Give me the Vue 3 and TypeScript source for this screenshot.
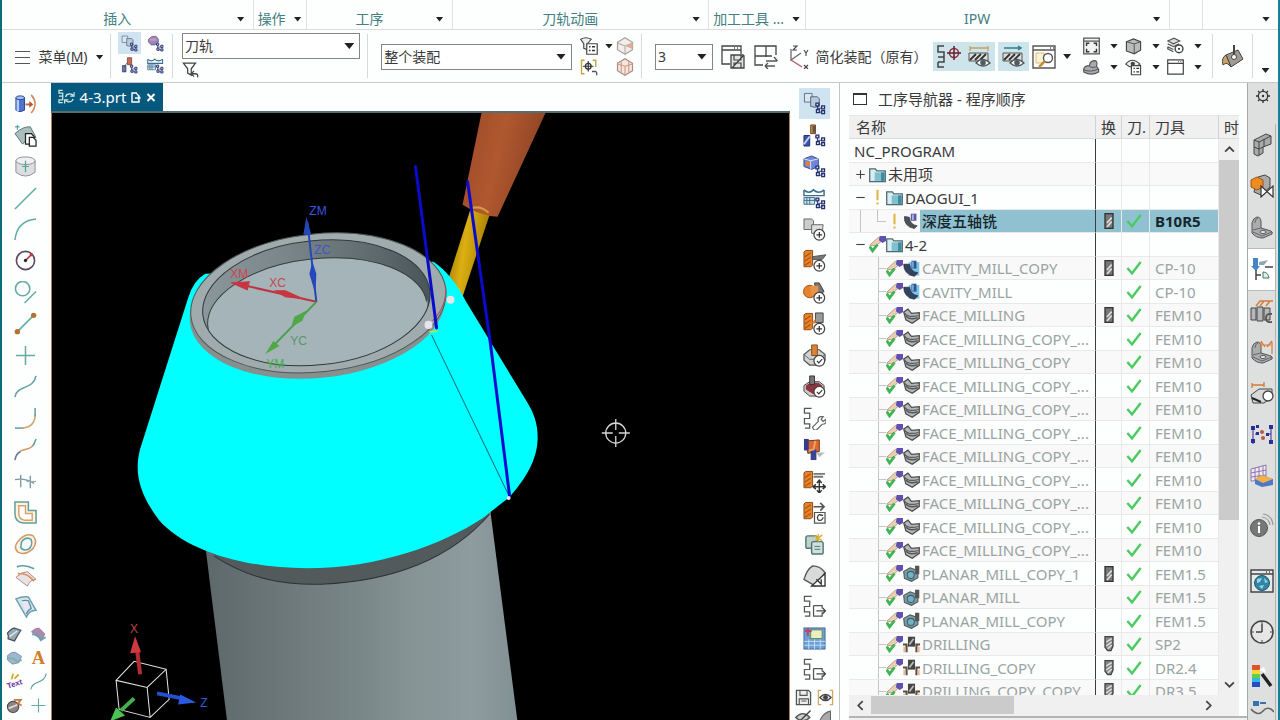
<script setup lang="ts">
import { ref } from 'vue'

type Row = {
  name: string
  slots: string[]
  tool?: string
  changed?: 'mill' | 'drill'
  dim?: boolean
  selected?: boolean
}

const tree =
  '<path d="M13 13.500h4M15 13v8h6M15 17h6" fill="none" stroke="#22306e"/><path d="M13.500 11.500h3v3h-3zM14 18.500h3v3h-3zM19.500 14.500h3v3h-3zM19.500 19.500h3v3h-3z" fill="#dde" stroke="#22306e" stroke-width="1.300"/>'
const plus =
  '<circle cx="17" cy="17.500" r="5.600" fill="#fff" stroke="#444" stroke-width="1.300"/><path d="M17 14.500v6M14 17.500h6" stroke="#333" stroke-width="1.300"/>'
const okMark =
  '<circle cx="17" cy="17.500" r="5.600" fill="#fff" stroke="#444" stroke-width="1.300"/><path d="M14.500 17.500l2 2.200 3.500-4" fill="none" stroke="#333" stroke-width="1.200"/>'
const orange =
  '<path d="M1 3l2-1.500h7V17l-2 1.500H1z" fill="#e5822b" stroke="#8c4a16"/><path d="M2 8l6-4M2 12.500l6-4M2 17l6-4" stroke="#a9540f" stroke-width="1.200"/>'
const snake = '<path d="M9 1.500H1.500v5H7v5.500H1.500v5.500H7V22H2" fill="none" stroke="#555" stroke-width="1.300"/>'
const eye =
  '<path d="M8 18q6-7 14 0q-7 6-14 0z" fill="#fff" stroke="#555" stroke-width="1.300"/><circle cx="15" cy="17.800" r="2.800" fill="#4d5b66"/>'
const bracket =
  '<path d="M2 8q1-5 5-6 4 0 4 5v6l10 3q2 1 1 3l-9 4q-7 0-11-5z" fill="#a9adb0" stroke="#555"/><path d="M5 8q0-4 3-5M3 15l8-2M3 17l9 4 10-4" fill="none" stroke="#666"/><ellipse cx="13" cy="17" rx="3" ry="1.500" fill="#eee" stroke="#555"/>'
const doorway =
  '<path d="M11 11h9v3M11 11v11h9v-4" fill="none" stroke="#555" stroke-width="1.300"/><path d="M14 16.500h9M20.500 13.500l3 3-3 3" fill="none" stroke="#444" stroke-width="1.300"/>'

const art: Record<string, string> = {
  extrude:
    '<path d="M2 6v13q4 3 9 0V6z" fill="#4f74cf" stroke="#27458f"/><path d="M4 7v13" stroke="#b9ccff" stroke-width="2.500"/><ellipse cx="6.500" cy="6" rx="4.500" ry="2" fill="#a9bff2" stroke="#27458f"/><path d="M12 13h7" stroke="#c76a3a" stroke-width="2"/><path d="M16 9.500l4 3.500-4 3.500z" fill="#b5523a"/><path d="M18 3q8 9 0 19" fill="none" stroke="#d08a5a" stroke-width="1.600"/>',
  patch:
    '<path d="M1 10Q10 2 17 3l6 11Q15 13 9 21z" fill="#a9bfbd" stroke="#5e7472"/><path d="M1 3h5M3.500 1v5" stroke="#2a9c8f"/><path d="M12 10h6l3 3v8h-9z" fill="#fff" stroke="#222" stroke-width="1.300"/><path d="M16 14h4l3 3v6h-7z" fill="#fff" stroke="#222" stroke-width="1.300"/>',
  cylinder:
    '<path d="M2 6v12q10 8 20 0V6z" fill="#dcdedf" stroke="#8b8f92"/><ellipse cx="12" cy="6" rx="10" ry="4" fill="#eff0f1" stroke="#8b8f92"/><path d="M12 6v12M8.500 12h7" stroke="#4fa596" stroke-width="1.300"/>',
  line: '<path d="M1 23L23 1" stroke="#5fae9f" stroke-width="1.600"/>',
  arc: '<path d="M1 23Q3 3 23 1" fill="none" stroke="#5fae9f" stroke-width="1.600"/>',
  circleRadius:
    '<circle cx="12" cy="12" r="9.500" fill="none" stroke="#5a4b63" stroke-width="1.700"/><path d="M12 12l6-6" stroke="#c23540" stroke-width="1.800"/><circle cx="12" cy="12" r="1.700" fill="#322"/><circle cx="18" cy="6" r="1.600" fill="#c23540"/>',
  circleTangent:
    '<circle cx="9" cy="8" r="7.500" fill="none" stroke="#67aaa0" stroke-width="1.600"/><path d="M11 23L23 11" stroke="#67aaa0" stroke-width="1.600"/>',
  segment:
    '<path d="M3 21L21 3" stroke="#5fae9f" stroke-width="1.600"/><circle cx="3.500" cy="20.500" r="2.800" fill="#b8702f"/><circle cx="20.500" cy="3.500" r="2.800" fill="#b8702f"/>',
  cross: '<path d="M12 2v20M2 12h20" stroke="#67aaa0" stroke-width="1.600"/>',
  spline: '<path d="M1 23C3 10 20 16 23 1" fill="none" stroke="#5f9f9f" stroke-width="1.600"/>',
  corner: '<path d="M1 22h9" stroke="#5f9f9f" stroke-width="1.600"/><path d="M8 22Q22 21 22 8" fill="none" stroke="#cfa470" stroke-width="1.600"/><path d="M22 10V1" stroke="#5f9f9f" stroke-width="1.600"/>',
  bridge: '<path d="M1 23Q2 16 7 14" fill="none" stroke="#6a7f88" stroke-width="1.600"/><path d="M6 14C12 11 19 12 20 7" fill="none" stroke="#d49a5f" stroke-width="1.600"/><path d="M20 8L23 1" stroke="#5f9f9f" stroke-width="1.600"/>',
  trim: '<path d="M1 10q10-2 20 4M7 5v13M17 6v13" fill="none" stroke="#7a9a9e" stroke-width="1.400"/><path d="M13 12h10" stroke="#9ab" stroke-width="1.200"/>',
  offset:
    '<path d="M1 1h14v9h8v13H10Q1 22 1 13z" fill="#fdf3e4" stroke="#5fa09c" stroke-width="1.600"/><path d="M5 5h7v8h7v7h-8q-6-1-6-7z" fill="#fff" stroke="#dba066" stroke-width="1.500"/>',
  ring: '<path d="M4 9Q12-1 20 3q5 6 0 13-8 8-16 4-5-5 0-11z" fill="#fdf3e4" stroke="#cf9a62" stroke-width="1.600"/><path d="M8 9q5-6 10-2 2 6-3 10-6 2-8-2z" fill="#f4fbfb" stroke="#5f9fa5" stroke-width="1.600"/>',
  project:
    '<path d="M3 3q8-3 18 2" fill="none" stroke="#5f9fa5" stroke-width="1.700"/><path d="M2 14q6-6 12-6l9 8q-6 0-9 7z" fill="#e6e3e6" stroke="#a98d80"/><path d="M4 10q10-1 17 8" fill="none" stroke="#dd9158" stroke-width="1.700"/>',
  surface:
    '<path d="M2 4Q9 1 15 2l8 14q-7 0-10 7z" fill="#d4e4ea" stroke="#6b9fae" stroke-width="1.500"/><path d="M8 6q5-1 7 0l3 8q-4 2-5 6" fill="#e8e8f4" stroke="#5a8fa8" stroke-width="1.300"/>',
  sheetA: '<path d="M2 10q6-7 10-7l9 3q-4 6-9 15l-9-3q1-4-1-8z" fill="#99a9b1" stroke="#44545c" stroke-width="1.800"/><path d="M5 15L16 7" stroke="#dfe9ee" stroke-width="2"/>',
  sheetB: '<path d="M2 8q6-6 11-5l8 8-4 9q-4-6-9-6z" fill="#a98ab0" stroke="#9a7a7d"/><path d="M3 12q8-1 12 8l7-4" fill="none" stroke="#62a5ad" stroke-width="2.500"/>',
  sheetC: '<path d="M2 8q6-6 11-5l9 6-4 9-9 2-7-6z" fill="#9fb6d0" stroke="#6f7fa0"/><path d="M3 12q9-2 12 5l7-3" fill="none" stroke="#79b3a9" stroke-width="2.500"/>',
  letterA: '<text x="12" y="20" text-anchor="middle" font-family="Liberation Serif, serif" font-weight="bold" font-size="26" fill="#cf7d27">A</text>',
  textArt: '<path d="M8 9L10 1M12 8l6-6" stroke="#d9a72a" stroke-width="2.500"/><text x="12" y="19" text-anchor="middle" transform="rotate(-18 12 15)" font-family="Liberation Sans, sans-serif" font-weight="bold" font-size="11" fill="#6a2f9c">Text</text>',
  nut: '<circle cx="10" cy="14" r="8" fill="#8d8585" stroke="#4b4545" stroke-width="1.500"/><path d="M4 16l12-5" stroke="#ddd" stroke-width="2.500"/><path d="M11 4h10l-4 5 5 3" fill="none" stroke="#c77a3d" stroke-width="2.500"/>',

  navProgram: '<path d="M1.500 1.500h8v9h-8z" fill="#dce6ee" stroke="#5f7488"/><path d="M8 5h7l2 2v8q-4 2-9 0z" fill="#b9cad8" stroke="#4f6478"/>' + tree,
  navMachine: '<path d="M8 1h5v9H8z" fill="#d98a3c" stroke="#72431a"/><path d="M10 2h3v7h-3z" fill="#555"/><path d="M1 12h6v11H1z" fill="#3a53ad" stroke="#22306e"/><path d="M1 21L7 13" stroke="#c9d4ff" stroke-width="1.800"/>' + tree,
  navGeometry: '<path d="M1 4l8-3 7 3v8l-7 3-8-3z" fill="#6e86dc" stroke="#3b4a94"/><path d="M1 4l7 2 8-2M8 6v9" fill="none" stroke="#dfe6ff"/><circle cx="5" cy="9" r="2.500" fill="#e5822b"/>' + tree,
  navMethod: '<path d="M1 3q5 5 10 0 5 5 11 0M1 3v6h21V3" fill="none" stroke="#3c6f8c" stroke-width="1.500"/><path d="M1 11h11v7H1zM4 11v7M7 11v7M1 14h11" fill="#cfe4ee" stroke="#3c6f8c"/>' + tree,
  addProgram: '<path d="M1 1h8l2 2v9H1z" fill="#ccc" stroke="#666"/><path d="M9 7h12l-1 9H9z" fill="#ddd" stroke="#666"/>' + plus,
  addTool: orange + '<path d="M10 8l14-2-4 5H10z" fill="#777" stroke="#555"/>' + plus,
  addGeometry: '<path d="M12 2h5l5 9-8 4z" fill="#777" stroke="#444"/><circle cx="7" cy="11" r="6.500" fill="#e5822b" stroke="#9a5012"/><path d="M8 5h8v10H8z" fill="#e99347"/>' + plus,
  addOperation: orange + '<path d="M13 1h8v10h-8z" fill="#999" stroke="#444"/><path d="M9 12l4-5v5z" fill="#e5822b"/>' + plus,
  generate: '<path d="M1 11l6-5h10l6 5v6l-7 5H7l-6-5z" fill="#d0d3d4" stroke="#555" stroke-width="1.300"/><path d="M1 11l6 5h10l6-5" fill="none" stroke="#666"/><path d="M9 1h6v11H9z" fill="#d9843a" stroke="#8c4a16"/>' + okMark,
  verify: '<path d="M1 11l6-4h10l5 4v7l-7 4H7l-6-5z" fill="#c9cbcc" stroke="#444"/><path d="M3 11l5-3h8l4 3v5l-9 4-8-5z" fill="#8f3440"/><path d="M7 1h5v9H7z" fill="#777" stroke="#333"/>' + okMark,
  editPath: snake + '<path d="M10 21l6-6q-1-4 2-5l3 0-2 3 2 2 3-2q1 5-4 5l-6 6q-3 1-4-3z" fill="#fff" stroke="#666" stroke-width="1.300"/>',
  machine: '<path d="M14 15h9l-6 5z" fill="#bbb"/><path d="M4 3l13-1v12l-12 2z" fill="#d96b2f" stroke="#7b2c10"/><path d="M1 1h5v12H1z" fill="#333c85"/><path d="M8 12h6v11H8z" fill="#39458f"/><path d="M6 13l5-1 2-9" stroke="#f0a070" stroke-width="2" fill="none"/>',
  moveTool: orange + '<path d="M11 4h12M11 7h10" stroke="#777" stroke-width="2"/><path d="M17 11v13M10.500 17.500h13M14.500 13.500l2.500-3 2.500 3M14.500 21l2.500 3 2.500-3M13.500 15l-3 2.500 3 2.500M20.500 15l3 2.500-3 2.500" fill="none" stroke="#333" stroke-width="1.500"/>',
  replaceTool: orange + '<path d="M11 6h10M18 2l4 4-4 4" fill="none" stroke="#555" stroke-width="1.700"/><path d="M12 12h11v11H12z" fill="#fff" stroke="#555" stroke-width="1.300"/><path d="M20 15q-4-2-5 2 0 4 4 3 2-1 2-3M18 15h3" fill="none" stroke="#444" stroke-width="1.300"/>',
  duplicate: '<rect x="3" y="3" width="12" height="13" rx="2" fill="#bcd3cd" stroke="#527770" stroke-width="1.500"/><rect x="9" y="9" width="12" height="13" rx="2" fill="#cfe0e0" stroke="#527770" stroke-width="1.500"/><path d="M16 1v8M12 3l8 5M20 2l-7 6" stroke="#d9b23a" stroke-width="1.500"/><path d="M12 14h6M12 17h6" stroke="#527770"/>',
  facet: '<path d="M1 16Q4 6 10 2q8 0 13 7l-10 14z" fill="#d8dadb" stroke="#555" stroke-width="1.400"/><path d="M23 10v13H9z" fill="#fff" stroke="#333" stroke-width="1.400"/><path d="M14 16l5 5v-5" fill="none" stroke="#333" stroke-width="1.400"/>',
  output: snake + doorway,
  postprocess: '<rect x="1" y="1" width="22" height="22" fill="#6d9fd6" stroke="#3f6b9f"/><path d="M8 3h12v9H8z" fill="#e8efc0" stroke="#6b8a4d"/><path d="M1 15h22M1 19h22M6 13v10M12 13v10M18 13v10" stroke="#c7dcf2"/><path d="M2 4h7M5 1v8" stroke="#b44a6a" stroke-width="2.200"/>',
  save: '<path d="M2 2h17l3 3v17H2z" fill="#eee" stroke="#555" stroke-width="1.800"/><path d="M7 2v7h10V2M6 22v-8h13v8M9 17h7" fill="none" stroke="#555" stroke-width="1.600"/>',
  eyeBox: '<path d="M6 2H2v20h4M18 2h4v20h-4" fill="none" stroke="#d0a860" stroke-width="1.800"/><path d="M4 12q8-9 16 0-8 9-16 0z" fill="#ddd" stroke="#444" stroke-width="1.600"/><circle cx="12" cy="12" r="3.400" fill="#444"/>',
  hide: '<path d="M1 12q10-11 20 0-10 9-20 0z" fill="#ccc" stroke="#555" stroke-width="1.800"/><path d="M3 21L22 2" stroke="#444" stroke-width="2"/>',
  plane: '<path d="M3 19Q8 5 19 3v16l-8 4z" fill="#aaa" stroke="#666" stroke-width="1.500"/>',
  hull: '<path d="M1 15q1-5 8-5 1-7 8-7 4 1 2 8l3 4v4q-10 6-21 0z" fill="#a7aaac" stroke="#555" stroke-width="1.600"/><path d="M1 16q9 4 20-1M9 11q3 3 9 1" fill="none" stroke="#555" stroke-width="1.400"/>',

  gear: '<circle cx="12" cy="12" r="7" fill="none" stroke="#333" stroke-width="2"/><circle cx="12" cy="12" r="1.800" fill="#333"/><path d="M12 1.500v4M12 18.500v4M1.500 12h4M18.500 12h4M4.600 4.600l2.500 2.500M16.900 16.900l2.500 2.500M4.600 19.400l2.500-2.500M16.900 7.100l2.500-2.500" stroke="#333" stroke-width="2"/>',
  parts: '<path d="M4 7l6-3 6-3 5 2v8l-8 3v6l-5 3-4-2z" fill="#a8abad" stroke="#444"/><path d="M4 7l5 2 12-6M9 9v13M14 6v8M4 14l5 2 4-2" fill="none" stroke="#444"/>',
  constraint: '<path d="M8 3l7-2 5 3v9l-9 8-7-3z" fill="#aaa" stroke="#444"/><path d="M1 6l6-3 6 3v7l-6 3-6-3z" fill="#ee8c24" stroke="#9c5510"/><path d="M11 12v11l6-5.500 6 5.500V12l-6 5.500z" fill="#fff" stroke="#333" stroke-width="1.200"/>',
  bracket,
  operation: '<path d="M3 1h5v8H3zM1 9h9l-4 5z" fill="#4584c6"/><path d="M6 13v10M6 18h5M15 10h8" stroke="#444" stroke-width="1.500"/><path d="M9 5l9-2-4 5h-5z" fill="#8ba6bd"/><path d="M13 21v-6q5 0 6 6z" fill="#dff0e6" stroke="#3f7a5f"/>',
  holes: '<path d="M1 9h5v12H1zM7 8h6v14H7zM14 9h6v12h-6z" fill="#b5b7b8" stroke="#444"/><path d="M6 7l4-5h13M10 7l4-5M16 7l4-5" fill="none" stroke="#d87a3a" stroke-width="1.500"/><path d="M22 15q-6-1-6 4t6 4" fill="none" stroke="#555" stroke-width="1.800"/>',
  bracketPmi: bracket + '<path d="M11 2v7M22 2v12M12 5h9M11 1l4 6M22 1l-5 6" stroke="#d87a3a" stroke-width="1.200"/>',
  check: '<path d="M1 14l8-6h13v8l-8 6H3z" fill="#d6d8d9" stroke="#444"/><path d="M2 2v5M14 1v5M2 4h12" stroke="#d87a3a" stroke-width="1.300"/><circle cx="18" cy="15" r="5" fill="#fff" stroke="#444" stroke-width="1.300"/><path d="M2 17l9 4" stroke="#222" stroke-width="2"/>',
  network: '<path d="M1 3h4v4H1zM6 9h3v3H6zM1 16h4v4H1zM19 2h4v4h-4zM16 10h3v3h-3zM19 17h4v4h-4zM6 2h3v3H6z" fill="#2a2f9a"/><path d="M3 3v18M5 11h4M21 3v18M16 11h5" stroke="#2a2f9a"/><circle cx="12" cy="9" r="2" fill="#b7564a"/><circle cx="13" cy="15" r="2" fill="#b7564a"/>',
  report: '<path d="M1 5l15-4v15L1 17zM1 9l15-3M1 13l15-2M5 4v13M9 3v13M13 2v13" fill="#f1e9ee" stroke="#8a78b0"/><path d="M5 15l7-4 11 4v6l-11 2-7-3z" fill="#4c78c6"/><path d="M5 15l7-4 11 4-10 4z" fill="#f2b04a"/>',
  info: '<circle cx="9" cy="15" r="8.500" fill="#777" stroke="#555"/><circle cx="9" cy="10.500" r="1.300" fill="#fff"/><path d="M9 13v7" stroke="#fff" stroke-width="2"/><path d="M12 4q7 1 8 8M13 1q9 1 10 11" fill="none" stroke="#999" stroke-width="1.200"/>',
  browser: '<path d="M1 1h22v22H1zM1 5h22M16 3h1M19 3h1" fill="#e8eaea" stroke="#444" stroke-width="1.400"/><circle cx="12" cy="14" r="7.500" fill="#2f86a6" stroke="#1d5a73"/><path d="M7 10l5-1-2 4-3 1zM14 9l4 4-3 1zM9 17l5-1-2 4z" fill="#9fd2de"/>',
  clock: '<circle cx="12" cy="12" r="11" fill="#e6e6e6" stroke="#444" stroke-width="1.500"/><path d="M12 12V4M12 12H6" stroke="#444" stroke-width="1.500"/><path d="M12 1v3M12 20v3M1 12h3M20 12h3" stroke="#444"/>',
  palette: '<path d="M2 1h8v5H2z" fill="#e0522e"/><path d="M2 6h8v4H2z" fill="#f5d83a"/><path d="M2 10h8v4H2z" fill="#5fcf4a"/><path d="M2 14h8v4H2z" fill="#36b7d8"/><path d="M2 18h8v5H2z" fill="#2a49c6"/><path d="M9 6l5-3 2 6z" fill="#fff"/><path d="M12 10l9 12" stroke="#222" stroke-width="3.500"/>',
  waves: '<path d="M3 5h6v5H3zM10 6h6v2h-6z" fill="#3d6fae"/><path d="M1 13q7 8 12 2t11 1" fill="none" stroke="#666" stroke-width="1.600"/>',

  gemTree: '<path d="M2 6l5-4h6l3 4v4l-5 4H6l-4-4z" fill="#9a86bd" stroke="#5a4a8a"/><path d="M4 5h9v3H4z" fill="#d29aa8"/>' + tree,
  viewTool: '<path d="M9 1h6v10H9z" fill="#c96a55" stroke="#6d3a33"/><path d="M2 12h5v9H2zM9 8L4 14" fill="#6b74a8" stroke="#333a66"/>' + tree,
  filterUndo: '<path d="M2 3h17l-6 8v9l-5-3v-6z" fill="#fff" stroke="#444" stroke-width="1.800"/><path d="M14 18h5q4 0 3 5M17 14l-4 4 4 4" fill="none" stroke="#444" stroke-width="1.800"/>',
  filterList: '<path d="M1 3q7-4 14 0l-5 6v8l-5-2V9z" fill="#eee" stroke="#444" stroke-width="1.500"/><path d="M9 9h14v14H9z" fill="#fff" stroke="#444" stroke-width="1.600"/><path d="M12 13h2M12 18h2M16 13h4M16 18h4" stroke="#333" stroke-width="2"/>',
  snap: '<path d="M6 3H2v18h4M17 3h4v9" fill="none" stroke="#c2a33e" stroke-width="1.800"/><circle cx="11" cy="11" r="3.800" fill="none" stroke="#333" stroke-width="1.800"/><path d="M11 4v14M4 11h14" stroke="#333" stroke-width="1.600"/><path d="M16 18h5q2 1 1 5" fill="none" stroke="#555" stroke-width="1.800"/>',
  hexA: '<path d="M2 7l10-6 10 6v10l-10 6-10-6z" fill="#f0eeec" stroke="#a9a09b" stroke-width="1.600"/><path d="M2 8l10 4 10-4M12 12v11" fill="none" stroke="#b5aaa4" stroke-width="1.400"/><path d="M12 12l10-4v8z" fill="#dcae98"/>',
  hexB: '<path d="M2 7l10-6 10 6v10l-10 6-10-6z" fill="#f6e6df" stroke="#a98c80" stroke-width="1.600"/><path d="M2 8l10 3 10-3M12 11v12M7 5v14M17 5v14" fill="none" stroke="#cf9a88" stroke-width="1.500"/>',
  windowSave: '<path d="M9 19H1V1h19v8M1 5h19M13 3h1M16 3h1" fill="none" stroke="#444" stroke-width="1.300"/><path d="M10 10h12l1 1v12H10z" fill="#e3e3e3" stroke="#444" stroke-width="1.300"/><path d="M13 10v5h7v-5M13 23v-5h7v5M11 23L23 10" fill="none" stroke="#444" stroke-width="1.200"/>',
  layoutSwap: '<path d="M9 20H1V1h21v9M12 1v11M1 11h17" fill="none" stroke="#444" stroke-width="1.300"/><path d="M12 16h11M20 12l3.500 4M11 21h10M11 21l3-3M11 21l3 3" fill="none" stroke="#555" stroke-width="1.400"/>',
  csys: '<path d="M4 4v11l10-7" fill="none" stroke="#6b6b6b" stroke-width="1.300"/><path d="M4 15l11 7" stroke="#b5595f" stroke-width="1.300"/><path d="M6 1h4L6 5h4M17 5l2 3 2-3M19 8v3M17 20l4 4M21 20l-4 4" fill="none" stroke="#444" stroke-width="1.100"/>',
  pathTarget: '<path d="M7 1H1v6h6v5H1M7 12v5H1M1 17v5h6" fill="none" stroke="#444" stroke-width="1.500"/><circle cx="17" cy="8" r="4.500" fill="none" stroke="#a02a3e" stroke-width="1.500"/><path d="M17 1v14M10 8h14" stroke="#5c2030" stroke-width="1.500"/>',
  hatchEyeA: '<path d="M2 3h18M2 1v5M20 1v5" stroke="#c9a15c" stroke-width="1.300"/><path d="M1 8h19v8H1z" fill="#ddd" stroke="#555"/><path d="M2 15l6-6M7 15l6-6M12 15l6-6" stroke="#333" stroke-width="1.800"/>' + eye,
  hatchEyeB: '<path d="M2 3h17M16 1l3 2-3 2" fill="none" stroke="#287f8d" stroke-width="1.500"/><path d="M1 8h19v8H1z" fill="#ddd" stroke="#555"/><path d="M2 15l6-6M7 15l6-6M12 15l6-6" stroke="#333" stroke-width="1.800"/>' + eye,
  inspect: '<path d="M1 1h22v22H1zM1 5h22M18 3h1M21 3h1" fill="#fff" stroke="#555" stroke-width="1.400"/><path d="M4 8h8v10H4z" fill="#fbf3d8" stroke="#d8bd6b"/><circle cx="16" cy="13" r="4.500" fill="#fff" stroke="#555" stroke-width="1.400"/><path d="M13 16l-6 6" stroke="#c88d3c" stroke-width="2.500"/>',
  fit: '<path d="M1 1h22v22H1zM1 5h22" fill="#f3f3f3" stroke="#555" stroke-width="1.800"/><path d="M5 12V8h4M15 8h4v4M19 16v4h-4M9 20H5v-4" fill="none" stroke="#333" stroke-width="2"/>',
  cube: '<path d="M2 6l10-4 10 4v12l-9 5-11-4z" fill="#b9bcbc" stroke="#444" stroke-width="1.600"/><path d="M2 6l11 3 9-3M13 9v14" fill="none" stroke="#555" stroke-width="1.400"/>',
  layers: '<path d="M1 5l9-4 8 4-9 4zM1 9l8 4 8-4M1 13l8 4M1 13v3l8 4" fill="#ddd" stroke="#555" stroke-width="1.600"/><circle cx="17" cy="16" r="5.500" fill="#fff" stroke="#444" stroke-width="2"/><circle cx="17" cy="16" r="1.500" fill="#333"/>',
  eyeList: '<path d="M1 8q9-11 20 0-10 9-20 0z" fill="#eee" stroke="#444" stroke-width="1.600"/><circle cx="11" cy="7.500" r="3" fill="#444"/><path d="M9 10h13v13H9z" fill="#fff" stroke="#444" stroke-width="1.600"/><path d="M12 14h2M12 19h2M16 14h4M16 19h4" stroke="#333" stroke-width="1.800"/>',
  window: '<path d="M1 2h22v20H1zM1 7h22M16 4.500h1M19 4.500h1" fill="#fff" stroke="#444" stroke-width="1.700"/>',
  probe: '<path d="M5 11l12-5 5 9-12 8z" fill="#a09a92" stroke="#444"/><path d="M5 11q-5 3-3 10 3-3 5-1l3 3z" fill="#c9a566" stroke="#444"/><path d="M13 1v12" stroke="#444" stroke-width="2"/><circle cx="13" cy="13" r="2.500" fill="#fff" stroke="#444"/>',

  plusBox: '<path d="M12 6v12M6 12h12" stroke="#444" stroke-width="1.600"/>',
  minusBox: '<path d="M6 12h12" stroke="#444" stroke-width="1.600"/>',
  bang: '<path d="M12 1v15M12 19v3" stroke="#e3b64a" stroke-width="3"/>',
  folder: '<path d="M1 4h8l2 3h12v15H1z" fill="#d9edf0" stroke="#4a6a74" stroke-width="1.800"/><path d="M8 9h14v12H8z" fill="#7fc0cc"/><path d="M17 9h5v12h-5z" fill="#3f8a9c"/>',
  ready: '<path d="M1 13L13 2l7 3-10 9z" fill="#e9cdb4" stroke="#a98a68"/><path d="M15 0h9v7l-5 3-5-4z" fill="#6050b0"/><path d="M1 15l4 6L12 12" fill="none" stroke="#3db554" stroke-width="4"/>',
  five: '<path d="M2 5q-1 14 14 17l4-4q-10-1-11-12z" fill="#4b5158" stroke="#333"/><path d="M11 1h8v10h-8z" fill="#5b59a8"/><path d="M14 2v8" stroke="#c9c8f0" stroke-width="2"/>',
  cavity: '<path d="M8 3h15v19H8z" fill="#7cc4e6"/><path d="M1 6q0 14 15 17l5-5Q11 17 9 6z" fill="#34435f" stroke="#223"/><path d="M12 1h7v11h-7z" fill="#2d5590"/><path d="M14 2v9" stroke="#9ec8ee" stroke-width="1.800"/>',
  face: '<path d="M1 7l6-4 5 6 11-1v8l-10 7-9-5z" fill="#b4b6b8" stroke="#4a4a4a" stroke-width="1.700"/><path d="M2 8q4 8 20 4M4 13q6 6 17 2" fill="none" stroke="#555" stroke-width="1.800"/>',
  planar: '<path d="M1 9l9-5 11 4v10l-9 5-10-4z" fill="#7f9aa4" stroke="#4a555a" stroke-width="1.500"/><circle cx="11" cy="14" r="5" fill="#73b2c4" stroke="#3c606c" stroke-width="1.500"/><path d="M17 1h6v12h-6z" fill="#555"/>',
  drill: '<path d="M7 1h10v14H7z" fill="#444"/><path d="M9 12l6-8" stroke="#bbb" stroke-width="2.500"/><path d="M0 12h5v11M24 12h-5v11" fill="none" stroke="#5d4c40" stroke-width="3"/><path d="M2 15v8M22 15v8" stroke="#e5b894" stroke-width="3"/>',
  mill: '<path d="M6 1h12v22H6z" fill="#777" stroke="#333" stroke-width="2"/><path d="M9 15l7-8M9 21l7-8" stroke="#ddd" stroke-width="2.500"/>',
  drillBit: '<path d="M6 1h12v14l-3 7h-5l-4-5z" fill="#888" stroke="#444" stroke-width="2"/><path d="M8 9l8-5M8 15l8-6M10 19l6-5" stroke="#e5e5e5" stroke-width="2"/>',
  tick: '<path d="M2 12l7 8L22 3" fill="none" stroke="#4bcb60" stroke-width="3.500"/>',
}

const ribbon = [
  { label: '插入', arrow: true, size: 'g252' },
  { label: '操作', arrow: true, size: 'g53' },
  { label: '工序', arrow: true, size: 'g145' },
  { label: '刀轨动画', arrow: true, size: 'g257' },
  { label: '加工工具 ...', arrow: true, size: 'g96' },
  { label: 'IPW', arrow: true, size: 'g365' },
  { label: '', arrow: false, size: 'g33' },
  { label: '', arrow: true, size: 'g75' },
]

const curveTools = ['extrude', 'patch', 'cylinder', 'line', 'arc', 'circleRadius', 'circleTangent', 'segment', 'cross', 'spline', 'corner', 'bridge', 'trim', 'offset', 'ring', 'project', 'surface']
const curvePairs = [['sheetA', 'sheetB'], ['sheetC', 'letterA'], ['textArt', 'spline'], ['nut', 'cross']]
const camTools = ['navProgram', 'navMachine', 'navGeometry', 'navMethod', 'addProgram', 'addTool', 'addGeometry', 'addOperation', 'generate', 'verify', 'editPath', 'machine', 'moveTool', 'replaceTool', 'duplicate', 'facet', 'output', 'postprocess', 'output']
const resourceTabs = [
  { icon: 'gear', size: 'top' },
  ...['parts', 'constraint', 'bracket', 'operation', 'holes', 'bracketPmi', 'check', 'network', 'report'].map((icon) => ({ icon, size: '' })),
  { icon: 'info', size: 't58' },
  { icon: 'browser', size: 't52' },
  { icon: 'clock', size: 't50' },
  { icon: 'palette', size: 't39' },
  { icon: 'waves', size: 't24' },
]
const viewMenus = ['fit', 'cube', 'layers', 'hull', 'eyeList', 'window']

const pathMode = ref('刀轨')
const scope = ref('整个装配')
const layer = ref('3')

const op = (name: string, icon: string, tool: string, changed?: 'mill' | 'drill'): Row => ({
  name, tool, changed, dim: true, slots: ['gap', 'stub', 'ready', icon],
})

const rows: Row[] = [
  { name: 'NC_PROGRAM', slots: [] },
  { name: '未用项', slots: ['plusBox', 'folder'] },
  { name: 'DAOGUI_1', slots: ['minusBox', 'bang', 'folder'] },
  { name: '深度五轴铣', slots: ['trunk', 'elbow', 'bang', 'five'], tool: 'B10R5', changed: 'mill', selected: true },
  { name: '4-2', slots: ['minusBox', 'ready', 'folder'] },
  op('CAVITY_MILL_COPY', 'cavity', 'CP-10', 'mill'),
  op('CAVITY_MILL', 'cavity', 'CP-10'),
  op('FACE_MILLING', 'face', 'FEM10', 'mill'),
  op('FACE_MILLING_COPY_...', 'face', 'FEM10'),
  op('FACE_MILLING_COPY', 'face', 'FEM10'),
  ...Array.from({ length: 8 }, () => op('FACE_MILLING_COPY_...', 'face', 'FEM10')),
  op('PLANAR_MILL_COPY_1', 'planar', 'FEM1.5', 'mill'),
  op('PLANAR_MILL', 'planar', 'FEM1.5'),
  op('PLANAR_MILL_COPY', 'planar', 'FEM1.5'),
  op('DRILLING', 'drill', 'SP2', 'drill'),
  op('DRILLING_COPY', 'drill', 'DR2.4', 'drill'),
  op('DRILLING_COPY_COPY', 'drill', 'DR3.5', 'drill'),
]
</script>

<template>
  <div class="app">
    <header class="ribbon">
      <div v-for="(g, i) in ribbon" :key="i" class="group" :class="g.size">
        <span class="group-label">{{ g.label }}</span>
        <button v-if="g.arrow" class="more" :aria-label="g.label + ' ▾'"><i class="tri"></i></button>
      </div>
    </header>

    <div class="toolbar">
      <button class="menu">
        <svg class="burger" viewBox="0 0 15 14"><path d="M0 1.500h15M0 7.500h15M0 13.500h15" stroke="#555" /></svg>
        <span>菜单(<u>M</u>)</span><i class="tri"></i>
      </button>
      <div class="quad bar">
        <button class="cell on" aria-label="navProgram"><svg viewBox="0 0 24 24" v-html="art.navProgram" /></button>
        <button class="cell" aria-label="gemTree"><svg viewBox="0 0 24 24" v-html="art.gemTree" /></button>
        <button class="cell" aria-label="viewTool"><svg viewBox="0 0 24 24" v-html="art.viewTool" /></button>
        <button class="cell" aria-label="navMethod"><svg viewBox="0 0 24 24" v-html="art.navMethod" /></button>
      </div>
      <div class="filter bar">
        <label class="drop"><select v-model="pathMode" aria-label="类型过滤器"><option>刀轨</option></select><i class="tri big"></i></label>
        <button class="small" aria-label="filterUndo"><svg viewBox="0 0 24 24" v-html="art.filterUndo" /></button>
      </div>
      <div class="scope bar">
        <label class="drop"><select v-model="scope" aria-label="选择范围"><option>整个装配</option></select><i class="tri big"></i></label>
        <div class="stack">
          <button class="combo" aria-label="filterList"><svg viewBox="0 0 24 24" v-html="art.filterList" /><i class="tri"></i></button>
          <button class="combo" aria-label="snap"><svg viewBox="0 0 24 24" v-html="art.snap" /></button>
        </div>
        <div class="stack">
          <button class="combo" aria-label="hexA"><svg viewBox="0 0 24 24" v-html="art.hexA" /></button>
          <button class="combo" aria-label="hexB"><svg viewBox="0 0 24 24" v-html="art.hexB" /></button>
        </div>
      </div>
      <div class="view bar">
        <label class="drop layer"><select v-model="layer" aria-label="工作图层"><option>3</option></select><i class="tri big"></i></label>
        <div class="trio">
          <button v-for="n in ['windowSave', 'layoutSwap', 'csys']" :key="n" class="tool" :aria-label="n"><svg viewBox="0 0 24 24" v-html="art[n]" /></button>
        </div>
        <button class="assembly">简化装配（原有）</button>
        <button class="tool lit" aria-label="pathTarget"><svg viewBox="0 0 24 24" v-html="art.pathTarget" /></button>
        <button class="tool lit" aria-label="hatchEyeA"><svg viewBox="0 0 24 24" v-html="art.hatchEyeA" /></button>
        <button class="tool lit apart" aria-label="hatchEyeB"><svg viewBox="0 0 24 24" v-html="art.hatchEyeB" /></button>
        <button class="inspect" aria-label="inspect"><svg viewBox="0 0 24 24" v-html="art.inspect" /><i class="tri"></i></button>
        <div class="menus">
          <button v-for="n in viewMenus" :key="n" class="combo" :aria-label="n"><svg viewBox="0 0 24 24" v-html="art[n]" /><i class="tri"></i></button>
        </div>
      </div>
      <button class="probe bar" aria-label="probe"><svg viewBox="0 0 24 24" v-html="art.probe" /></button>
      <button class="overflow" aria-label="更多"><i class="tri"></i></button>
    </div>

    <main class="work">
      <nav class="strip">
        <button v-for="n in curveTools" :key="n" class="strip-item" :aria-label="n"><svg viewBox="0 0 24 24" v-html="art[n]" /></button>
        <div v-for="(p, i) in curvePairs" :key="i" class="pair">
          <button v-for="n in p" :key="n" :aria-label="n"><svg viewBox="0 0 24 24" v-html="art[n]" /></button>
        </div>
      </nav>

      <section class="stage">
        <div class="tabs">
          <button class="tab">
            <svg class="tab-state" viewBox="0 0 18 16"><path d="M5 1H1v3h4v3H1M5 7v4H1v3h4M8 8q1-4 6-3l2 1M17 3v4h-4M16 10q-1 4-6 3l-2-1M7 15v-4h4" fill="none" stroke="#cfe8e4" stroke-width="1.300" /></svg>
            <span>4-3.prt</span>
            <svg class="tab-mark" viewBox="0 0 10 11"><path d="M6 1H1v9h7V8M5 1l3 3v1M4 6h4M7 4l2 2-2 2" fill="none" stroke="#fff" stroke-width="1.400" /></svg>
            <svg class="tab-mark" viewBox="0 0 10 10"><path d="M1.500 1.500l7 7M8.500 1.500l-7 7" stroke="#fff" stroke-width="2" /></svg>
          </button>
        </div>
        <svg class="scene" viewBox="53 113 736 607" preserveAspectRatio="xMidYMid slice" role="img" aria-label="4-3.prt">
          <defs>
            <linearGradient id="shaft" x1="0" x2="1">
              <stop offset="0" stop-color="#5d686a" /><stop offset="0.300" stop-color="#6f7b7d" /><stop offset="0.500" stop-color="#7a8788" />
              <stop offset="0.650" stop-color="#859394" /><stop offset="0.850" stop-color="#8e9b9f" /><stop offset="1" stop-color="#819093" />
            </linearGradient>
            <linearGradient id="wall" x1="0" x2="1">
              <stop offset="0" stop-color="#8a979b" /><stop offset="0.400" stop-color="#7a8588" /><stop offset="0.800" stop-color="#5c686b" /><stop offset="1" stop-color="#4a5558" />
            </linearGradient>
            <linearGradient id="holder" x1="0" x2="1" y2="0.300">
              <stop offset="0" stop-color="#9a4927" /><stop offset="0.500" stop-color="#b1582f" /><stop offset="1" stop-color="#8c4324" />
            </linearGradient>
            <linearGradient id="gold" x1="0" x2="1" y2="0.300">
              <stop offset="0.200" stop-color="#a98004" /><stop offset="0.500" stop-color="#dcb012" /><stop offset="0.900" stop-color="#b18806" />
            </linearGradient>
            <clipPath id="bore"><ellipse cx="317" cy="303" rx="114" ry="62" transform="rotate(-6 317 303)" /></clipPath>
          </defs>
          <rect x="-400" y="-400" width="1700" height="1600" fill="#000" />
          <path d="M206 545L229 730H519L490 505z" fill="url(#shaft)" />
          <path d="M206 548C240 577 280 585 322 584C390 581 450 560 491 512L480 500H240z" fill="#525a5b" />
          <path d="M215 556C250 579 285 585 322 584C390 581 450 560 490 514" fill="none" stroke="#2c3233" />
          <path d="M472 206L447 285L463 297L490 215z" fill="url(#gold)" />
          <path d="M482 113L463 205Q480 216 498 217L546 113z" fill="url(#holder)" />
          <path d="M471 209Q480 205 489 213" fill="none" stroke="#d89b38" stroke-width="2" />
          <path d="M206 274Q194 281 189 298L141 449C136 468 137 490 160 520C186 550 245 568 307 568C380 568 443 544 483 518L510 497C530 474 538 456 538 437C538 423 534 413 528 403L466 301Q453 275 434 262z" fill="#00ffff" />
          <ellipse cx="318" cy="309" rx="128" ry="69" transform="rotate(-6 318 309)" fill="#86908f" />
          <ellipse cx="319" cy="303" rx="128" ry="69" transform="rotate(-6 319 303)" fill="#a0abad" stroke="#4d585a" />
          <ellipse cx="317" cy="303" rx="114" ry="62" transform="rotate(-6 317 303)" fill="url(#wall)" />
          <g clip-path="url(#bore)">
            <ellipse cx="318" cy="315" rx="110" ry="56" transform="rotate(-6 318 315)" fill="#a5b4b8" stroke="#343d40" />
            <path d="M210 326Q238 364 317 364Q400 356 428 300V390H200z" fill="#a5b4b8" />
          </g>
          <ellipse cx="317" cy="303" rx="114" ry="62" transform="rotate(-6 317 303)" fill="none" stroke="#30393b" />
          <path d="M446 286Q448 306 433 321" fill="none" stroke="#b24c55" />
          <path d="M432 335L510 497" stroke="#126a78" />
          <g stroke="#0b0bcd" stroke-width="3" stroke-linecap="round" fill="none"><path d="M416 167L437 328" /><path d="M468 182L491 345L510 496" /></g>
          <path d="M430 332l8-1" stroke="#a7e84a" stroke-width="2" />
          <g fill="#e9e4ea"><circle cx="451" cy="300" r="4" /><circle cx="429" cy="325" r="4" /><circle cx="509" cy="498" r="2" /></g>

          <g font-family="Liberation Sans, sans-serif" font-size="12">
            <path d="M317 302L308 222" stroke="#2447bb" stroke-width="2" /><path d="M307 217l-3 18h8zM313 262l-3 12 6 20 1-20z" fill="#2447bb" />
            <path d="M317 302L238 284" stroke="#bb3540" stroke-width="2" /><path d="M232 283l18-1-2 8zM276 291l10 0 18 8-18-2z" fill="#c73640" stroke="#c73640" />
            <path d="M317 302L270 350" stroke="#4a9e48" stroke-width="2" /><path d="M266 354l8-13 6 5zM292 327l3-10 12-6-4 10z" fill="#4da845" />
            <text x="310" y="215" fill="#3c55e0">ZM</text><text x="315" y="254" fill="#4053cf">ZC</text>
            <text x="231" y="278" fill="#cf4650">XM</text><text x="270" y="287" fill="#c54750">XC</text>
            <text x="291" y="345" fill="#5a9468">YC</text><text x="267" y="368" fill="#3fb04c">YM</text>
            <path d="M117 680L135 661L167 669L148 687zM117 680L120 709L151 717L148 687M151 717L170 699L167 669" fill="none" stroke="#e4e4e4" />
            <path d="M141 674L138 650" stroke="#b52c35" stroke-width="4" /><path d="M136 636l-5 17 11-1z" fill="#cc3a40" />
            <path d="M158 693L183 698" stroke="#2450cf" stroke-width="4" /><path d="M197 702l-18 2 2-10z" fill="#2a58e0" />
            <path d="M135 698L122 710" stroke="#43b24d" stroke-width="4" /><path d="M111 721l6-14 9 8z" fill="#4cc455" />
            <text x="131" y="633" fill="#b5474a">X</text><text x="201" y="707" fill="#3558d8">Z</text>
          </g>
          <g fill="none" stroke="#d8d8d8"><circle cx="616" cy="433" r="10" stroke-width="1.300" /><path d="M616 419v11M616 436v11M602 433h11M619 433h11" stroke-width="1.300" /></g>
        </svg>
      </section>

      <nav class="strip cam">
        <button v-for="(n, i) in camTools" :key="i" class="strip-item" :class="{ on: i === 0 }" :aria-label="n"><svg viewBox="0 0 24 24" v-html="art[n]" /></button>
        <div class="pair">
          <button aria-label="save"><svg viewBox="0 0 24 24" v-html="art.save" /></button>
          <button aria-label="eyeBox"><svg viewBox="0 0 24 24" v-html="art.eyeBox" /></button>
        </div>
        <div class="pair cut">
          <button aria-label="hide"><svg viewBox="0 0 24 24" v-html="art.hide" /></button>
          <button aria-label="plane"><svg viewBox="0 0 24 24" v-html="art.plane" /></button>
        </div>
      </nav>

      <section class="navigator">
        <h2><i class="pin"></i>工序导航器 - 程序顺序</h2>
        <div class="grid-area">
          <table>
            <colgroup><col /><col class="c-change" /><col class="c-path" /><col class="c-tool" /><col class="c-time" /></colgroup>
            <thead>
              <tr><th class="first">名称</th><th>换</th><th>刀.</th><th>刀具</th><th>时</th></tr>
            </thead>
            <tbody>
              <tr v-for="(r, i) in rows" :key="i" :class="{ dim: r.dim, selected: r.selected }">
                <td class="name">
                  <div class="node">
                    <span v-for="(s, k) in r.slots" :key="k" class="slot" :class="s">
                      <svg v-if="art[s]" viewBox="0 0 24 24" v-html="art[s]" />
                    </span>
                    <span class="title">{{ r.name }}</span>
                  </div>
                </td>
                <td class="mark"><svg v-if="r.changed" viewBox="0 0 24 24" v-html="r.changed === 'mill' ? art.mill : art.drillBit" /></td>
                <td class="mark"><svg v-if="r.tool" viewBox="0 0 24 24" v-html="art.tick" /></td>
                <td class="tool-name">{{ r.tool }}</td>
                <td></td>
              </tr>
            </tbody>
          </table>
          <div class="vscroll">
            <button aria-label="向上"><svg viewBox="0 0 10 10"><path d="M1 7l4-4 4 4" fill="none" stroke="#444" stroke-width="1.600" /></svg></button>
            <div class="track"><div class="thumb"></div></div>
            <button aria-label="向下"><svg viewBox="0 0 10 10"><path d="M1 3l4 4 4-4" fill="none" stroke="#444" stroke-width="1.600" /></svg></button>
          </div>
        </div>
        <div class="hscroll">
          <button aria-label="向左"><svg viewBox="0 0 10 10"><path d="M7 1L3 5l4 4" fill="none" stroke="#444" stroke-width="1.600" /></svg></button>
          <div class="track"><div class="thumb"></div></div>
          <button aria-label="向右"><svg viewBox="0 0 10 10"><path d="M3 1l4 4-4 4" fill="none" stroke="#444" stroke-width="1.600" /></svg></button>
        </div>
        <div class="foot"></div>
      </section>

      <nav class="resources">
        <button v-for="t in resourceTabs" :key="t.icon" :class="[t.size, { active: t.icon === 'operation' }]" :aria-label="t.icon"><svg viewBox="0 0 24 24" v-html="art[t.icon]" /></button>
      </nav>
    </main>
  </div>
</template>

<style>
body { margin: 0; }
</style>

<style scoped>
.app {
  display: flex;
  flex-direction: column;
  height: 100vh;
  overflow: hidden;
  box-sizing: border-box;
  border-left: 2px solid #0b6a7e;
  border-right: 2px solid #1a8194;
  background: #fdfefe;
  color: #3a3a3a;
  font: 14px/20px "Noto Sans", "Noto Sans CJK SC", sans-serif;
}
button, select { font: inherit; color: inherit; background: none; border: 0; padding: 0; margin: 0; }
button { display: flex; align-items: center; justify-content: center; }
svg { display: block; flex: none; }
.tri { width: 8px; height: 5px; background: #222; clip-path: polygon(0 0, 100% 0, 50% 100%); flex: none; }
.tri.big { width: 10px; height: 6px; }

.ribbon { display: flex; height: 29px; border-bottom: 1px solid #dcdcdc; flex: none; }
.group { display: flex; align-items: flex-end; min-width: 0; box-sizing: border-box; border-right: 1px solid #e2e2e2; }
.group:last-child { border-right: 0; }
.group-label { flex: 1; padding-left: 4px; text-align: center; color: #43807f; white-space: nowrap; }
.more { width: 24px; height: 20px; flex: none; }
.g252 { flex: 252 1 0; } .g53 { flex: 53 1 0; } .g145 { flex: 145 1 0; } .g257 { flex: 257 1 0; }
.g96 { flex: 96 1 0; } .g365 { flex: 365 1 0; } .g33 { flex: 33 1 0; } .g75 { flex: 75 1 0; justify-content: flex-end; }

.toolbar { display: flex; height: 52px; border-bottom: 1px solid #c9c9c9; flex: none; }
.toolbar > * { box-sizing: border-box; }
.bar { position: relative; }
.menu { width: 109px; padding: 2px 0 0 6px; gap: 8px; white-space: nowrap; position: relative; flex: none; }
.menu::after, .bar::after { content: ""; position: absolute; right: 0; top: 4px; bottom: 4px; width: 1px; background: #d9d9d9; }
.burger { width: 15px; height: 14px; }
.quad { display: grid; grid-template-columns: 23px 23px; grid-auto-rows: 22px; gap: 0 3px; padding: 2px 6px 0 7px; width: 62px; flex: none; }
.cell svg { width: 17px; height: 17px; }
.on { background: #cfe3f0; }
.drop { display: grid; grid-template-columns: 1fr 20px; align-items: center; height: 26px; box-sizing: border-box; border: 1px solid #858585; background: #fff; min-width: 0; }
.drop select { appearance: none; grid-area: 1 / 1 / 2 / 3; width: 100%; height: 24px; padding-left: 2px; outline: 0; }
.drop .tri { grid-area: 1 / 2; pointer-events: none; justify-self: center; }
.filter { flex: 194 1 0; padding: 3px 8px 0 9px; }
.small { margin-top: 2px; }
.small svg { width: 17px; height: 17px; }
.scope { flex: 275 1 0; display: flex; align-items: center; padding: 1px 8px 0 13px; }
.scope .drop { flex: 1; margin-right: 8px; }
.stack { display: flex; flex-direction: column; gap: 3px; margin-right: 3px; }
.stack:last-child { margin-right: 0; }
.combo { justify-content: flex-start; gap: 7px; }
.combo svg { width: 18px; height: 18px; }
.view { width: 571px; flex: none; display: flex; align-items: center; padding: 1px 4px 0 13px; }
.layer { width: 58px; margin-right: 4px; }
.trio { display: flex; width: 99px; }
.trio .tool { flex: 1; }
.tool { width: 31px; height: 29px; flex: none; }
.tool svg, .inspect svg { width: 24px; height: 24px; }
.assembly { width: 118px; white-space: nowrap; justify-content: flex-start; }
.lit { background: #cde5ea; }
.apart { margin-left: 3px; }
.inspect { gap: 7px; margin-left: 3px; width: 44px; justify-content: flex-start; }
.menus { display: grid; grid-template-columns: repeat(3, 42px); gap: 3px 0; margin-left: 7px; }
.menus .combo { gap: 10px; }
.menus .combo svg { width: 17px; height: 18px; }
.probe { width: 40px; flex: none; }
.probe svg { width: 24px; height: 24px; }
.overflow { flex: none; width: 25px; align-items: flex-end; padding-bottom: 9px; }

.work { flex: 1; display: flex; min-height: 0; }
.strip { width: 49px; flex: none; display: flex; flex-direction: column; box-sizing: border-box; padding: 5px 0 3px; }
.strip-item { flex: 4 1 0; min-height: 0; width: 31px; margin: 0 auto 0 8px; }
.strip-item svg { width: 23px; height: 23px; }
.pair { flex: 3 1 0; min-height: 0; display: flex; justify-content: center; align-items: center; gap: 7px; }
.pair svg { width: 17px; height: 17px; overflow: visible; }
.cam { width: 50px; border-right: 1px solid #c4c4c4; }
.cam .strip-item { margin-left: 9px; }
.cam .pair { gap: 5px; }
.cam .cut { flex-grow: 1; align-items: flex-start; }

.stage { flex: 1; min-width: 0; display: flex; flex-direction: column; }
.tabs { height: 28px; flex: none; display: flex; border-bottom: 2px solid #53706f; }
.tab { background: #05597f; color: #fff; width: 112px; height: 28px; gap: 5px; font-size: 15px; }
.tab-state { width: 17px; height: 16px; }
.tab-mark { width: 10px; height: 11px; }
.scene { flex: 1; min-height: 0; width: 100%; box-sizing: border-box; border-left: 1px solid #a57d5c; border-right: 1px solid #a57d5c; }

.navigator { width: 407px; flex: none; box-sizing: border-box; padding: 0 8px 0 9px; display: flex; flex-direction: column; }
h2 { margin: 0; height: 32px; flex: none; display: flex; align-items: center; gap: 11px; padding-left: 4px; font-size: 15px; font-weight: 400; }
.pin { width: 14px; height: 12px; box-sizing: border-box; border: 1px solid #333; border-top-width: 2px; }
.grid-area { position: relative; flex: 1; min-height: 0; overflow: hidden; }
table { width: 100%; table-layout: fixed; border-spacing: 0; font-size: 15px; }
.c-change { width: 26px; } .c-path { width: 28px; } .c-tool { width: 69px; } .c-time { width: 20px; }
th { height: 24px; box-sizing: border-box; padding: 0 0 0 5px; line-height: 22px; text-align: left; font-weight: 400; background: #f0f0f0; border-right: 1px solid #d2d2d2; border-bottom: 1px solid #dcdcdc; border-top: 1px solid #e6e6e6; white-space: nowrap; overflow: hidden; }
th.first { padding-left: 7px; }
th:last-child { padding-left: 5px; border-right: 0; }
td { height: 24px; box-sizing: border-box; padding: 0; line-height: 20px; border-bottom: 1px solid #e9e9e9; border-right: 1px solid #e9e9e9; white-space: nowrap; }
tr:nth-child(even) td { height: 23px; background: #f9f9f9; }
td.name { border-right: 1px solid #3c3c3c; overflow: hidden; }
.node { display: flex; height: 22px; align-items: center; padding-left: 3px; }
.slot { width: 17px; height: 24px; display: flex; align-items: center; justify-content: center; flex: none; }
.slot svg { width: 17px; height: 17px; }
.trunk { background: linear-gradient(#c5c5c5, #c5c5c5) 8px 0 / 1px 100% no-repeat; }
.elbow { background: linear-gradient(#c5c5c5, #c5c5c5) 8px 0 / 1px 50% no-repeat, linear-gradient(#c5c5c5, #c5c5c5) 8px 50% / 9px 1px no-repeat; }
.stub { background: linear-gradient(#c5c5c5, #c5c5c5) 9px 0 / 1px 100% no-repeat, linear-gradient(#c5c5c5, #c5c5c5) 9px 50% / 8px 1px no-repeat; }
.title { flex: 1; padding-left: 2px; }
.dim { color: #9aa4a2; }
.mark svg { width: 16px; height: 16px; margin: 0 auto; }
.mark + .mark svg { margin-left: 4px; }
.tool-name { padding-left: 5px; }
.selected .title, tr.selected td:nth-child(n + 2):nth-child(-n + 4) { background: #8fc1d0; color: #16262c; }
.selected .title { font-weight: 500; line-height: 23px; }
.selected .tool-name { font-weight: 700; }

.vscroll { position: absolute; right: 0; top: 24px; bottom: 0; width: 20px; background: #f0f0f0; display: flex; flex-direction: column; }
.vscroll button { height: 21px; width: 20px; flex: none; }
.vscroll button svg, .hscroll button svg { width: 11px; height: 11px; }
.track { flex: 1; }
.vscroll .thumb { height: 70%; background: #cbcbcb; }
.hscroll { height: 21px; flex: none; background: #f0f0f0; display: flex; padding-right: 20px; }
.hscroll button { width: 22px; }
.hscroll .thumb { width: 44%; height: 18px; margin-top: 1px; background: #cbcbcb; }
.foot { height: 4px; flex: none; box-sizing: border-box; border-top: 2px solid #b4b4b4; margin-right: -8px; background: #f0f0f0; }

.resources { width: 31px; flex: none; box-sizing: border-box; border-left: 1px solid #a9a9a9; background: #dedfdf; display: flex; flex-direction: column; }
.resources button { flex: 41 1 0; min-height: 0; width: 28px; border-right: 1px solid #b5b5b5; box-sizing: border-box; }
.resources svg { width: 24px; height: 24px; }
.resources .top { align-items: flex-start; width: 30px; border-right: 0; }
.resources .top svg { width: 16px; height: 16px; margin-top: 5px; }
.resources .active { background: #fff; border-top: 1px solid #bbb; border-bottom: 1px solid #bbb; }
.resources .t58 { flex-grow: 58; } .resources .t52 { flex-grow: 52; } .resources .t50 { flex-grow: 50; }
.resources .t39 { flex-grow: 39; } .resources .t24 { flex-grow: 24; align-items: flex-start; }
</style>
